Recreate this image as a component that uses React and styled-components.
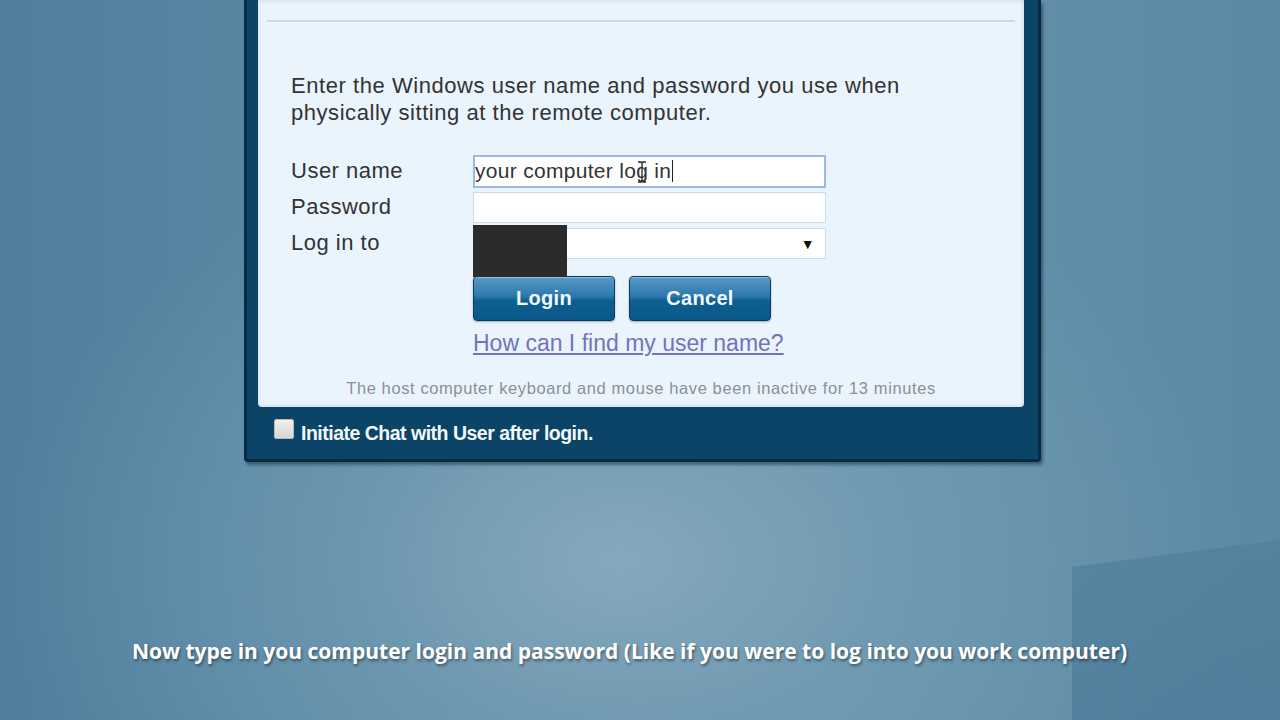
import React from 'react';
import styled, { createGlobalStyle } from 'styled-components';

const GlobalStyle = createGlobalStyle`
  html, body {
    margin: 0;
    padding: 0;
  }
  body {
    font-family: "Liberation Sans", Arial, sans-serif;
  }
`;

const Screen = styled.div`
  position: relative;
  width: 1280px;
  height: 720px;
  overflow: hidden;
  display: flex;
  flex-direction: column;
  background:
    radial-gradient(ellipse 620px 420px at 620px 560px, #86a8bc 0%, rgba(120, 160, 182, 0.55) 45%, rgba(90, 138, 166, 0) 100%),
    linear-gradient(90deg, #4f7f9d 0%, #5f8ea9 40%, #6593ad 65%, #5b88a3 100%);
`;

/* darker wall plane, bottom right of the desktop */
const Plane = styled.div`
  position: absolute;
  right: 0;
  bottom: 0;
  width: 208px;
  height: 180px;
  background: linear-gradient(180deg, #507f9c 0%, #4a7a99 100%);
  clip-path: polygon(0 15%, 100% 0, 100% 100%, 0 100%);
  opacity: 0.7;
`;

const DialogRow = styled.div`
  display: flex;
  padding-left: 244px;
  position: relative;
  z-index: 1;
`;

const Frame = styled.div`
  width: 797px;
  box-sizing: border-box;
  background: #0c4468;
  border: 3px solid #062c45;
  border-top: none;
  border-radius: 0 0 4px 4px;
  box-shadow: 2px 3px 3px rgba(10, 30, 45, 0.45);
  padding: 0 14px 0 11px;
`;

const Panel = styled.div`
  background: #eaf4fd;
  border-radius: 0 0 4px 4px;
  box-shadow: inset 0 0 4px rgba(120, 150, 170, 0.35);
  padding: 20px 9px 0;
`;

const Rule = styled.div`
  height: 2px;
  background: #cfd9e2;
  border-bottom: 1px solid #f4f8fb;
`;

const Body = styled.div`
  padding: 49px 0 0 24px;
`;

const Intro = styled.p`
  margin: 0;
  font-size: 22px;
  letter-spacing: 0.55px;
  line-height: 27px;
  color: #333;
  width: 660px;
`;

const Form = styled.div`
  display: grid;
  grid-template-columns: 182px 353px;
  grid-auto-rows: 36px;
  margin-top: 27px;
  align-items: center;
`;

const Label = styled.label`
  font-size: 22px;
  letter-spacing: 0.5px;
  color: #333;
`;

const Field = styled.div`
  position: relative;
  height: ${(p) => (p.$focus ? 33 : 31)}px;
  box-sizing: border-box;
  background: #fff;
  border: ${(p) => (p.$focus ? '2px solid #9cb8e6' : '1px solid #c9dbec')};
  display: flex;
  align-items: center;
  font-size: 21px;
  letter-spacing: 0.3px;
  color: #333;
`;

const Caret = styled.span`
  display: inline-block;
  width: 1px;
  height: 22px;
  background: #222;
  margin-left: 1px;
`;

const IBeam = styled.svg`
  position: absolute;
  left: 162px;
  top: 4px;
`;

const Arrow = styled.span`
  position: absolute;
  right: 10px;
  top: 7px;
  font-size: 14px;
  color: #111;
`;

const Redact = styled.div`
  position: absolute;
  left: -1px;
  top: -4px;
  width: 94px;
  height: 52px;
  background: #2b2b2c;
`;

const Buttons = styled.div`
  display: flex;
  gap: 14px;
  margin: 15px 0 0 182px;
`;

const Button = styled.button`
  width: 142px;
  height: 45px;
  border: 1px solid #0a3a58;
  border-radius: 4px;
  background: linear-gradient(180deg, #5a9ac6 0%, #2b78ad 45%, #0d5f93 55%, #0a5888 100%);
  box-shadow: inset 0 1px 0 rgba(255, 255, 255, 0.35), 0 1px 2px rgba(0, 0, 0, 0.3);
  color: #f2f8fc;
  font-family: "Liberation Sans", Arial, sans-serif;
  font-weight: bold;
  font-size: 20px;
  letter-spacing: 0.3px;
  padding: 0;
`;

const HelpLink = styled.a`
  display: inline-block;
  margin: 9px 0 0 182px;
  font-size: 23px;
  color: #7373bb;
  text-decoration: underline;
  text-underline-offset: 2px;
`;

const Status = styled.p`
  margin: 22px 0 0;
  padding-bottom: 9px;
  text-align: center;
  font-size: 16.5px;
  letter-spacing: 0.6px;
  color: #8c8f94;
`;

const ChatRow = styled.div`
  display: flex;
  align-items: center;
  gap: 7px;
  height: 52px;
  padding-left: 16px;
`;

const Check = styled.span`
  width: 20px;
  height: 20px;
  box-sizing: border-box;
  background: linear-gradient(180deg, #f0efec, #d8d6d2);
  border: 1px solid #b8b8b8;
  border-radius: 2px;
  margin-top: -8px;
`;

const ChatText = styled.span`
  font-family: "Liberation Sans Narrow", "Liberation Sans", Arial, sans-serif;
  font-weight: bold;
  font-size: 19.5px;
  color: #f2f8fc;
  letter-spacing: -0.5px;
`;

const Caption = styled.div`
  position: relative;
  z-index: 1;
  margin-top: 175px;
  text-align: center;
  padding-right: 21px;
  font-family: "Open Sans", Lato, sans-serif;
  font-weight: 700;
  font-size: 21px;
  color: #fff;
  text-shadow: 1px 2px 3px rgba(0, 0, 0, 0.45);
`;

export default function App() {
  return (
    <>
      <GlobalStyle />
      <Screen>
        <Plane />
        <DialogRow>
          <Frame>
            <Panel>
              <Rule />
              <Body>
                <Intro>
                  Enter the Windows user name and password you use when<br />
                  physically sitting at the remote computer.
                </Intro>
                <Form>
                  <Label>User name</Label>
                  <Field $focus>
                    your computer log in<Caret />
                    <IBeam width="10" height="22" viewBox="0 0 10 22">
                      <path d="M1 1h3l1 1 1-1h3M5 2v18M1 21h3l1-1 1 1h3" stroke="#222" strokeWidth="1.3" fill="none" />
                    </IBeam>
                  </Field>
                  <Label>Password</Label>
                  <Field />
                  <Label>Log in to</Label>
                  <Field>
                    <Redact />
                    <Arrow>▼</Arrow>
                  </Field>
                </Form>
                <Buttons>
                  <Button>Login</Button>
                  <Button>Cancel</Button>
                </Buttons>
                <HelpLink href="#">How can I find my user name?</HelpLink>
              </Body>
              <Status>The host computer keyboard and mouse have been inactive for 13 minutes</Status>
            </Panel>
            <ChatRow>
              <Check />
              <ChatText>Initiate Chat with User after login.</ChatText>
            </ChatRow>
          </Frame>
        </DialogRow>
        <Caption>Now type in you computer login and password (Like if you were to log into you work computer)</Caption>
      </Screen>
    </>
  );
}
